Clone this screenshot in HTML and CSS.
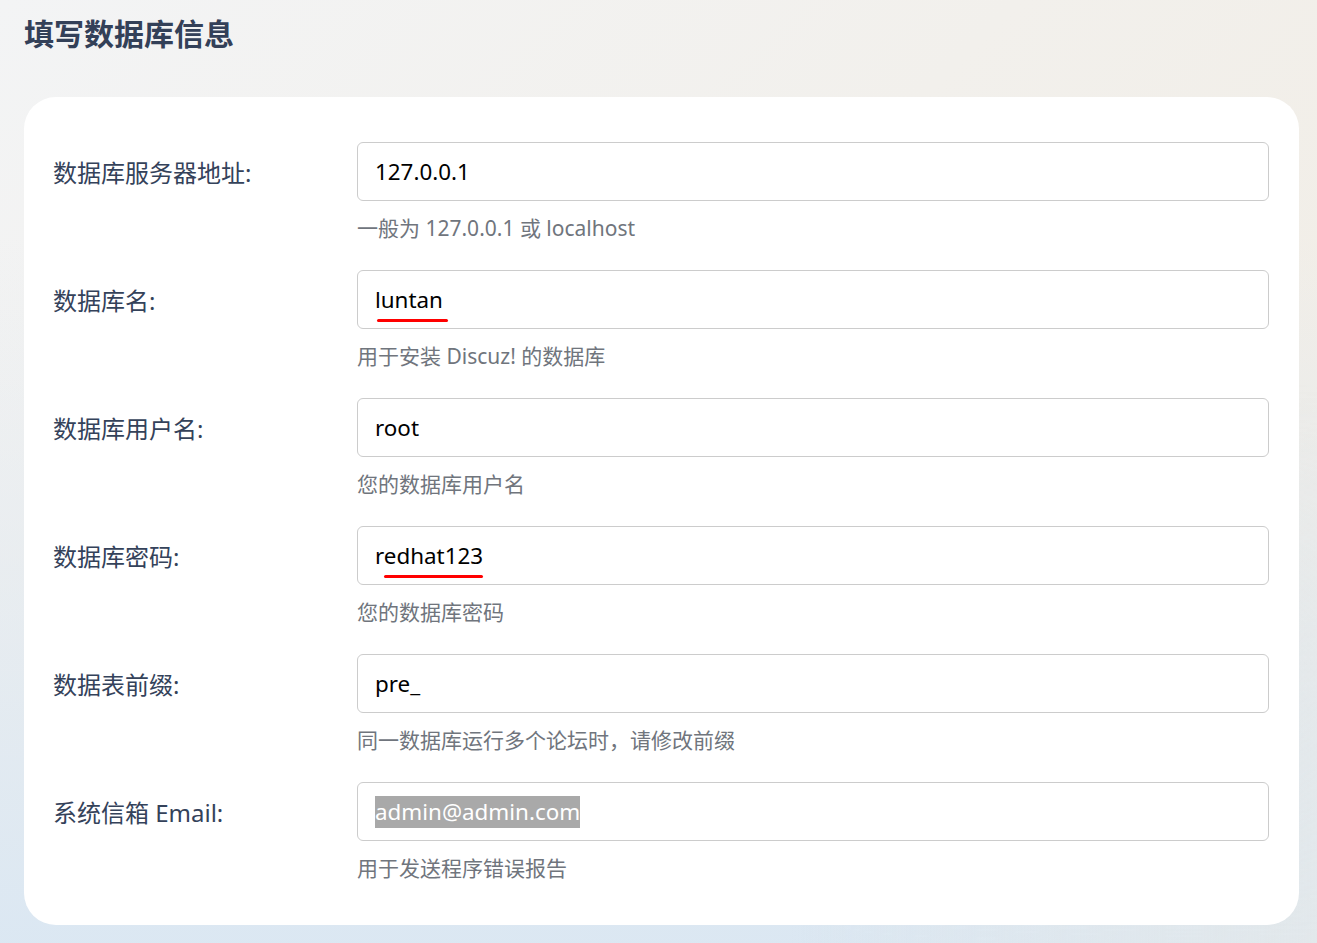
FILE: index.html
```html
<!DOCTYPE html>
<html lang="zh-CN">
<head>
<meta charset="utf-8">
<title>填写数据库信息</title>
<link rel="stylesheet" href="styles.css">
</head>
<body>
<div class="page">
  <h1 class="title">填写数据库信息</h1>
  <div class="card">
    <div class="row">
      <div class="label">数据库服务器地址:</div>
      <div class="field">
        <div class="input"><span class="val">127.0.0.1</span></div>
        <div class="hint">一般为 127.0.0.1 或 localhost</div>
      </div>
    </div>
    <div class="row">
      <div class="label">数据库名:</div>
      <div class="field">
        <div class="input"><span class="val mark mark-a">luntan</span></div>
        <div class="hint">用于安装 Discuz! 的数据库</div>
      </div>
    </div>
    <div class="row">
      <div class="label">数据库用户名:</div>
      <div class="field">
        <div class="input"><span class="val">root</span></div>
        <div class="hint">您的数据库用户名</div>
      </div>
    </div>
    <div class="row">
      <div class="label">数据库密码:</div>
      <div class="field">
        <div class="input"><span class="val mark mark-b">redhat123</span></div>
        <div class="hint">您的数据库密码</div>
      </div>
    </div>
    <div class="row">
      <div class="label">数据表前缀:</div>
      <div class="field">
        <div class="input"><span class="val">pre_</span></div>
        <div class="hint">同一数据库运行多个论坛时，请修改前缀</div>
      </div>
    </div>
    <div class="row">
      <div class="label">系统信箱 Email:</div>
      <div class="field">
        <div class="input"><span class="val selected">admin@admin.com</span></div>
        <div class="hint">用于发送程序错误报告</div>
      </div>
    </div>
  </div>
</div>
</body>
</html>
```
FILE: styles.css
```css
html, body {
  margin: 0;
  padding: 0;
}
body {
  width: 1317px;
  height: 943px;
  overflow: hidden;
  font-family: "Noto Sans", "Noto Sans CJK SC", sans-serif;
  background:
    linear-gradient(135deg, #f3f4f5 0%, #f2f0ec 45%, #f1ece3 100%);
  position: relative;
}
.page {
  position: relative;
  height: 943px;
  padding: 0 18px 0 24px;
  box-sizing: border-box;
  background:
    linear-gradient(to top, rgba(218,231,243,0.95) 0%, rgba(225,233,240,0.55) 40%, rgba(240,242,244,0) 75%);
}
.page::after {
  content: "";
  position: absolute;
  inset: 0;
  background: linear-gradient(to left, rgba(229,232,232,0.7) 0%, rgba(229,232,232,0) 40%);
  pointer-events: none;
  -webkit-mask-image: linear-gradient(to top, #000 0%, transparent 60%);
  mask-image: linear-gradient(to top, #000 0%, transparent 60%);
}
.title {
  margin: 0;
  padding-top: 12px;
  height: 97px;
  box-sizing: border-box;
  font-family: "Noto Sans CJK SC", sans-serif;
  font-size: 30px;
  line-height: 40px;
  font-weight: 700;
  color: #334058;
}
.card {
  position: relative;
  z-index: 1;
  width: 1275px;
  box-sizing: border-box;
  background: #fff;
  border-radius: 32px;
  padding: 45px 30px 44px 30px;
  display: flex;
  flex-direction: column;
  gap: 29px;
}
.row {
  display: grid;
  grid-template-columns: 303px 1fr;
}
.label {
  height: 59px;
  display: flex;
  align-items: center;
  font-family: "Noto Sans", "Noto Sans CJK SC", sans-serif;
  font-size: 24px;
  color: #34425a;
  padding-top: 0;
  margin-left: -1px;
  box-sizing: border-box;
}
.input {
  height: 59px;
  box-sizing: border-box;
  border: 1px solid #cccccc;
  border-radius: 6px;
  padding: 0 17px;
  display: flex;
  align-items: center;
}
.val {
  position: relative;
  font-family: "Noto Sans", "Noto Sans CJK SC", sans-serif;
  font-size: 22.4px;
  line-height: 32px;
  color: #000;
}
.mark::after {
  content: "";
  position: absolute;
  height: 3px;
  border-radius: 2px;
  background: #ff0000;
  bottom: -6px;
}
.mark-a::after { left: 2px; right: -5px; }
.mark-b::after { left: 9px; right: 0; }
.selected {
  background: #a9a9a9;
  color: #fff;
}
.hint {
  margin-top: 14px;
  height: 26px;
  font-family: "Noto Sans", "Noto Sans CJK SC", sans-serif;
  font-size: 21px;
  line-height: 26px;
  color: #70757d;
}
```
